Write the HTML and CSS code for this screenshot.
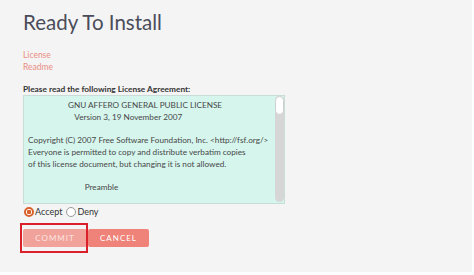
FILE: index.html
```html
<!DOCTYPE html>
<html lang="en">
<head>
    <meta charset="UTF-8">
    <meta name="viewport" content="width=device-width, initial-scale=1.0">
    <title>Ready To Install</title>
    <link rel="stylesheet" href="styles.css">
</head>
<body>
    <div class="page">
        <h1>Ready To Install</h1>

        <div class="doc-links">
            <a href="#">License</a>
            <a href="#">Readme</a>
        </div>

        <form class="install-form">
            <label class="agreement-label" for="license-text">Please read the following License Agreement:</label>
            <div class="license-box">
                <textarea id="license-text" readonly>                    GNU AFFERO GENERAL PUBLIC LICENSE
                       Version 3, 19 November 2007

 Copyright (C) 2007 Free Software Foundation, Inc. &lt;http://fsf.org/&gt;
 Everyone is permitted to copy and distribute verbatim copies
 of this license document, but changing it is not allowed.

                            Preamble

  The GNU Affero General Public License is a free, copyleft license for
software and other kinds of works, specifically designed to ensure
cooperation with the community in the case of network server software.

  The licenses for most software and other practical works are designed
to take away your freedom to share and change the works.  By contrast,
our General Public Licenses are intended to guarantee your freedom to
share and change all versions of a program--to make sure it remains free
software for all its users.</textarea>
                <!-- scrollbar drawn by hand, headless hides the native one -->
                <div class="scrollbar"><div class="scrollbar-thumb"></div></div>
            </div>

            <div class="choice">
                <label><input type="radio" name="agree" value="accept" checked>Accept</label>
                <label><input type="radio" name="agree" value="deny">Deny</label>
            </div>

            <div class="actions">
                <span class="highlight">
                    <button type="button" class="btn btn-commit">Commit</button>
                </span>
                <button type="button" class="btn btn-cancel">Cancel</button>
            </div>
        </form>
    </div>
</body>
</html>
```

FILE: styles.css
```css
body {
    margin: 0;
    background-color: #ffffff;
    font-family: Lato, "Open Sans", Arial, sans-serif;
}

.page {
    width: 472px;
    height: 272px;
    box-sizing: border-box;
    padding: 9px 0 0 23px;
    background-color: #f4f4f4;
}

h1 {
    margin: 0;
    font-size: 20.5px;
    font-weight: 400;
    line-height: 26px;
    color: #4b4c5a;
}

.doc-links {
    display: flex;
    flex-direction: column;
    margin-top: 14px;
}

.doc-links a {
    font-size: 8.5px;
    line-height: 12px;
    color: #ea8d84;
    text-decoration: none;
}

.install-form {
    display: flex;
    flex-direction: column;
    align-items: flex-start;
    margin-top: 11px;
}

.agreement-label {
    font-size: 8.3px;
    font-weight: 700;
    line-height: 11px;
    color: #333333;
}

.license-box {
    display: flex;
    width: 262px;
    height: 109px;
    box-sizing: border-box;
    background-color: #d5f5ed;
    border: 1px solid #c9dcd7;
}

textarea {
    flex: 1;
    margin: 0;
    padding: 4px 0 0 2px;
    font-family: Lato, "Open Sans", Arial, sans-serif;
    font-size: 8.2px;
    line-height: 11.7px;
    color: #484848;
    background: transparent;
    border: none;
    resize: none;
    outline: none;
    overflow: hidden;
}

.scrollbar {
    width: 9px;
    margin: 0 0 1px 0;
    background-color: #d6d6d6;
    border-radius: 5px;
}

.scrollbar-thumb {
    height: 19px;
    box-sizing: border-box;
    background-color: #ffffff;
    border: 1px solid #cfcfcf;
    border-radius: 5px;
}

.choice {
    display: flex;
    gap: 4px;
    margin-top: 2px;
    margin-left: 1px;
}

.choice label {
    display: flex;
    align-items: center;
    font-size: 9px;
    line-height: 12px;
    color: #333333;
}

.choice input {
    appearance: none;
    width: 10px;
    height: 10px;
    margin: 0 1px 0 0;
    border: 1px solid #9a9a9a;
    border-radius: 50%;
    background-color: #ffffff;
}

.choice input:checked {
    border: 2px solid #d9612b;
    background: radial-gradient(circle, #d9612b 0 2px, #ffffff 2.5px);
}

.actions {
    display: flex;
    margin-top: 11px;
}

.highlight {
    position: relative;
    display: flex;
}

.highlight::after {
    content: "";
    position: absolute;
    left: -3px;
    top: -6px;
    width: 68px;
    height: 30px;
    box-sizing: border-box;
    border: 2px solid #d9202b;
}

.btn {
    height: 18px;
    padding: 0;
    border: none;
    border-radius: 2px;
    font-family: Lato, "Open Sans", Arial, sans-serif;
    font-size: 8px;
    letter-spacing: 1px;
    text-transform: uppercase;
    color: #ffffff;
    cursor: pointer;
}

.btn-commit {
    width: 64px;
    background-color: #f1a39b;
    color: #fbe3e0;
}

.btn-cancel {
    width: 61px;
    margin-left: 1px;
    background-color: #ef8279;
}
```
